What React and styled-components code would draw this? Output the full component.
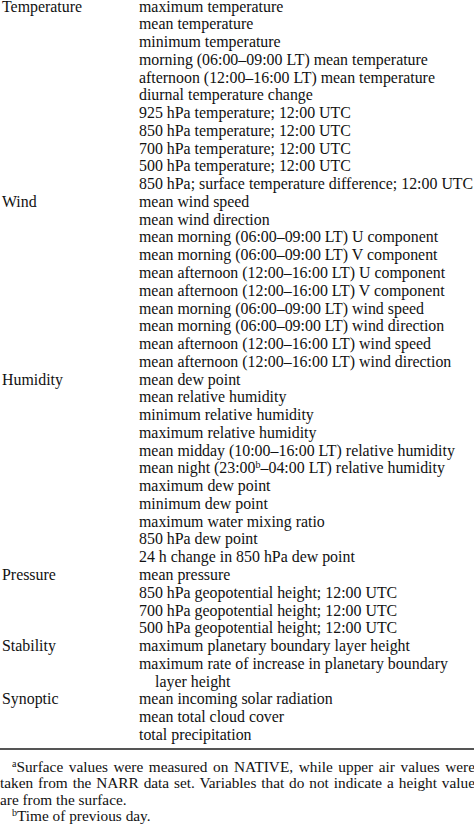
import React from "react";
import styled, { createGlobalStyle } from "styled-components";

const Global = createGlobalStyle`
  html, body { margin: 0; padding: 0; background: #fff; overflow: hidden; }
  body { font-family: "Liberation Serif", "Times New Roman", serif; color: #111; }
`;

const Page = styled.div`
  width: 474px;
  padding: 0 0 0 2px;
  margin-top: -2.5px;
  box-sizing: border-box;
  font-size: 15.9px;
  line-height: 17.76px;
`;

const Row = styled.div`
  display: grid;
  grid-template-columns: 137px 1fr;
`;

const Label = styled.div`
  white-space: nowrap;
`;

const Items = styled.div`
  display: flex;
  flex-direction: column;
`;

const Item = styled.div`
  white-space: ${(p) => (p.$wrap ? "normal" : "nowrap")};
  padding-left: ${(p) => (p.$wrap ? "16px" : "0")};
  text-indent: ${(p) => (p.$wrap ? "-16px" : "0")};
`;

const Rule = styled.hr`
  border: 0;
  height: 2px;
  background: #555;
  margin: 4px 0 0 -2px;
  width: 474px;
`;

const Notes = styled.div`
  margin-top: 9px;
  margin-left: -2px;
  width: 475px;
  text-align: justify;
  font-size: 15.3px;
  line-height: 16.6px;
`;

const Note = styled.p`
  margin: 0;
  text-indent: 12px;
`;

const Sup = styled.sup`
  font-size: 10px;
  line-height: 0;
  vertical-align: 5px;
`;

const data = [
  ["Temperature", [
    "maximum temperature",
    "mean temperature",
    "minimum temperature",
    "morning (06:00–09:00 LT) mean temperature",
    "afternoon (12:00–16:00 LT) mean temperature",
    "diurnal temperature change",
    "925 hPa temperature; 12:00 UTC",
    "850 hPa temperature; 12:00 UTC",
    "700 hPa temperature; 12:00 UTC",
    "500 hPa temperature; 12:00 UTC",
    "850 hPa; surface temperature difference; 12:00 UTC",
  ]],
  ["Wind", [
    "mean wind speed",
    "mean wind direction",
    "mean morning (06:00–09:00 LT) U component",
    "mean morning (06:00–09:00 LT) V component",
    "mean afternoon (12:00–16:00 LT) U component",
    "mean afternoon (12:00–16:00 LT) V component",
    "mean morning (06:00–09:00 LT) wind speed",
    "mean morning (06:00–09:00 LT) wind direction",
    "mean afternoon (12:00–16:00 LT) wind speed",
    "mean afternoon (12:00–16:00 LT) wind direction",
  ]],
  ["Humidity", [
    "mean dew point",
    "mean relative humidity",
    "minimum relative humidity",
    "maximum relative humidity",
    "mean midday (10:00–16:00 LT) relative humidity",
    "NIGHT",
    "maximum dew point",
    "minimum dew point",
    "maximum water mixing ratio",
    "850 hPa dew point",
    "24 h change in 850 hPa dew point",
  ]],
  ["Pressure", [
    "mean pressure",
    "850 hPa geopotential height; 12:00 UTC",
    "700 hPa geopotential height; 12:00 UTC",
    "500 hPa geopotential height; 12:00 UTC",
  ]],
  ["Stability", [
    "maximum planetary boundary layer height",
    "WRAP:maximum rate of increase in planetary boundary layer height",
  ]],
  ["Synoptic", [
    "mean incoming solar radiation",
    "mean total cloud cover",
    "total precipitation",
  ]],
];

function renderItem(t, i) {
  if (t === "NIGHT") {
    return (
      <Item key={i}>
        mean night (23:00<Sup>b</Sup>–04:00 LT) relative humidity
      </Item>
    );
  }
  if (t.startsWith("WRAP:")) {
    return (
      <Item key={i} $wrap>
        {t.slice(5)}
      </Item>
    );
  }
  return <Item key={i}>{t}</Item>;
}

export default function App() {
  return (
    <>
      <Global />
      <Page>
        {data.map(([label, items]) => (
          <Row key={label}>
            <Label>{label}</Label>
            <Items>{items.map(renderItem)}</Items>
          </Row>
        ))}
        <Rule />
        <Notes>
          <Note>
            <Sup>a</Sup>Surface values were measured on NATIVE, while upper air values were
            taken from the NARR data set. Variables that do not indicate a height value
            are from the surface.
          </Note>
          <Note>
            <Sup>b</Sup>Time of previous day.
          </Note>
        </Notes>
      </Page>
    </>
  );
}
